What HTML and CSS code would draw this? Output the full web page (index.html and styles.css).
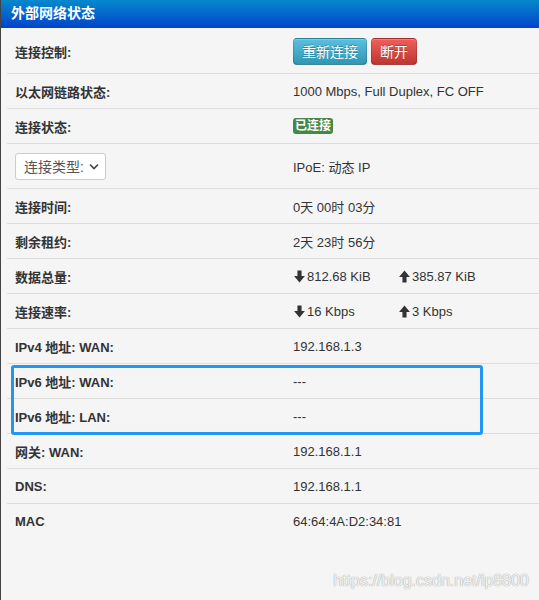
FILE: index.html
```html
<!DOCTYPE html>
<html lang="zh-CN">
<head>
  <meta charset="UTF-8" />
  <title>外部网络状态</title>
  <meta name="viewport" content="width=device-width, initial-scale=1" />
  <link rel="stylesheet" href="styles.css">
</head>
<body>
  <div class="panel">
    <div class="panel-head">外部网络状态</div>

    <div class="info">
      <div class="row tall">
        <div class="label">连接控制:</div>
        <div class="value">
          <button class="btn btn-info">重新连接</button>
          <button class="btn btn-danger">断开</button>
        </div>
      </div>
      <div class="row">
        <div class="label">以太网链路状态:</div>
        <div class="value">1000 Mbps, Full Duplex, FC OFF</div>
      </div>
      <div class="row">
        <div class="label">连接状态:</div>
        <div class="value"><span class="badge">已连接</span></div>
      </div>
      <div class="row tall">
        <div class="label">
          <div class="select">
            <span>连接类型:</span>
            <svg width="10" height="7" viewBox="0 0 10 7"><path d="M1 1.5 L5 5.5 L9 1.5" fill="none" stroke="#444" stroke-width="1.6"/></svg>
          </div>
        </div>
        <div class="value">IPoE: 动态 IP</div>
      </div>
      <div class="row">
        <div class="label">连接时间:</div>
        <div class="value">0天 00时 03分</div>
      </div>
      <div class="row">
        <div class="label">剩余租约:</div>
        <div class="value">2天 23时 56分</div>
      </div>
      <div class="row">
        <div class="label">数据总量:</div>
        <div class="value">
          <span class="stat"><svg class="arrow" viewBox="0 0 12 12"><path d="M4.1 0.5 H7.9 V5.5 H11 L6 11.5 L1 5.5 H4.1 Z"/></svg>812.68 KiB</span>
          <span class="stat"><svg class="arrow" viewBox="0 0 12 12"><path d="M4.1 11.5 H7.9 V6.5 H11 L6 0.5 L1 6.5 H4.1 Z"/></svg>385.87 KiB</span>
        </div>
      </div>
      <div class="row">
        <div class="label">连接速率:</div>
        <div class="value">
          <span class="stat"><svg class="arrow" viewBox="0 0 12 12"><path d="M4.1 0.5 H7.9 V5.5 H11 L6 11.5 L1 5.5 H4.1 Z"/></svg>16 Kbps</span>
          <span class="stat"><svg class="arrow" viewBox="0 0 12 12"><path d="M4.1 11.5 H7.9 V6.5 H11 L6 0.5 L1 6.5 H4.1 Z"/></svg>3 Kbps</span>
        </div>
      </div>
      <div class="row">
        <div class="label">IPv4 地址: WAN:</div>
        <div class="value">192.168.1.3</div>
      </div>
      <div class="row">
        <div class="label">IPv6 地址: WAN:</div>
        <div class="value">---</div>
      </div>
      <div class="row">
        <div class="label">IPv6 地址: LAN:</div>
        <div class="value">---</div>
      </div>
      <div class="row">
        <div class="label">网关: WAN:</div>
        <div class="value">192.168.1.1</div>
      </div>
      <div class="row">
        <div class="label">DNS:</div>
        <div class="value">192.168.1.1</div>
      </div>
      <div class="row last">
        <div class="label">MAC</div>
        <div class="value">64:64:4A:D2:34:81</div>
      </div>
    </div>

    <!-- Markierung um die IPv6 Zeilen -->
    <div class="highlight"></div>
    <div class="watermark">https://blog.csdn.net/lp8800</div>
  </div>
</body>
</html>
```

FILE: styles.css
```css
body {
  margin: 0;
  padding: 0;
  background: #f5f5f5;
  font-family: "Liberation Sans", Arial, "Noto Sans CJK SC", sans-serif;
  font-size: 13px;
  color: #333;
}
.panel {
  position: relative;
  height: 600px;
  border-left: 1px solid #444;
  box-sizing: border-box;
  overflow: hidden;
}
.panel-head {
  height: 28px;
  line-height: 27px;
  padding-left: 10px;
  background: linear-gradient(to bottom, #0589cb 0%, #0243cc 100%);
  color: #fff;
  font-weight: bold;
  font-size: 14px;
}
.info {
  margin-left: 6px;
  padding-top: 1px;
}
.row {
  display: flex;
  align-items: center;
  height: 34px;
  border-bottom: 1px solid #dddddd;
  padding-left: 8px;
}
.row.tall { height: 44px; }
.row.last { border-bottom: none; }
.label {
  width: 278px;
  flex-shrink: 0;
  font-weight: bold;
}
.value {
  display: flex;
  align-items: center;
}
.btn {
  font-family: "Liberation Sans", Arial, "Noto Sans CJK SC", sans-serif;
  font-size: 14px;
  color: #fff;
  height: 27px;
  padding: 0 8px;
  margin-right: 4px;
  border-radius: 4px;
  border: 1px solid rgba(0,0,0,0.15);
  border-bottom-color: rgba(0,0,0,0.3);
  text-shadow: 0 -1px 0 rgba(0,0,0,0.25);
  box-shadow: inset 0 1px 0 rgba(255,255,255,0.2);
  cursor: pointer;
}
.btn-info {
  background: linear-gradient(to bottom, #5bc0de, #2f96b4);
}
.btn-danger {
  background: linear-gradient(to bottom, #ee5f5b, #bd362f);
}
.badge {
  display: inline-block;
  background: #468847;
  color: #fff;
  font-weight: bold;
  font-size: 12px;
  line-height: 16px;
  padding: 0 2px;
  border-radius: 3px;
}
.select {
  display: flex;
  align-items: center;
  justify-content: space-between;
  width: 91px;
  height: 27px;
  box-sizing: border-box;
  padding: 0 6px 0 8px;
  background: #fff;
  border: 1px solid #ccc;
  border-radius: 3px;
  font-weight: normal;
  font-size: 14px;
  color: #555;
}
.stat {
  display: inline-flex;
  align-items: center;
  width: 105px;
}
.arrow {
  width: 13px;
  height: 13px;
  margin-right: 1px;
  fill: #333;
}
.highlight {
  position: absolute;
  left: 10px;
  top: 365px;
  width: 472px;
  height: 70px;
  box-sizing: border-box;
  border: 3px solid #2196f3;
  border-radius: 3px;
}
.watermark {
  position: absolute;
  right: 10px;
  bottom: 10px;
  font-size: 16px;
  color: #f2f2f2;
  text-shadow: 0 0 1px #aaa, 0 0 1px #aaa;
}
```
